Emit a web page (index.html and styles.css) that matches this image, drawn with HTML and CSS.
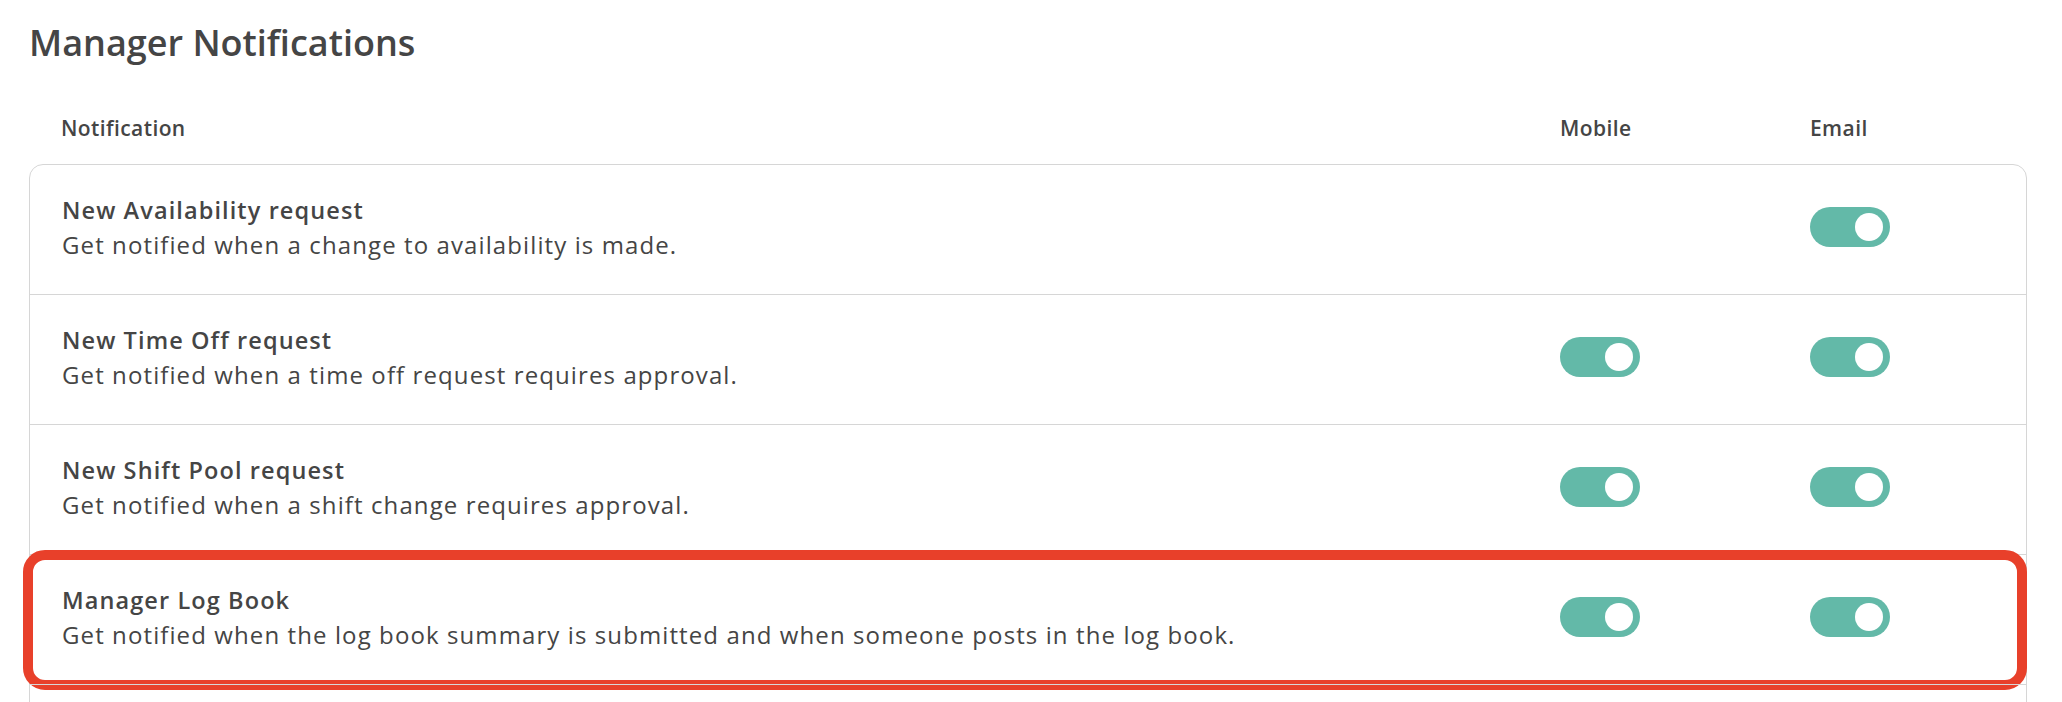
FILE: index.html
```html
<!DOCTYPE html>
<html lang="en">
<head>
    <meta charset="UTF-8">
    <meta name="viewport" content="width=device-width, initial-scale=1.0">
    <title>Manager Notifications</title>
    <link rel="stylesheet" href="styles.css">
</head>
<body>
    <div class="page">
        <h1 class="page-title">Manager Notifications</h1>

        <div class="list-head">
            <span>Notification</span>
            <span>Mobile</span>
            <span>Email</span>
        </div>

        <div class="card">
            <div class="row">
                <div class="info">
                    <div class="info-title">New Availability request</div>
                    <div class="info-desc">Get notified when a change to availability is made.</div>
                </div>
                <div class="cell"></div>
                <div class="cell"><span class="toggle on"></span></div>
            </div>

            <div class="row">
                <div class="info">
                    <div class="info-title">New Time Off request</div>
                    <div class="info-desc">Get notified when a time off request requires approval.</div>
                </div>
                <div class="cell"><span class="toggle on"></span></div>
                <div class="cell"><span class="toggle on"></span></div>
            </div>

            <div class="row">
                <div class="info">
                    <div class="info-title">New Shift Pool request</div>
                    <div class="info-desc">Get notified when a shift change requires approval.</div>
                </div>
                <div class="cell"><span class="toggle on"></span></div>
                <div class="cell"><span class="toggle on"></span></div>
            </div>

            <div class="row highlighted">
                <div class="info">
                    <div class="info-title">Manager Log Book</div>
                    <div class="info-desc">Get notified when the log book summary is submitted and when someone posts in the log book.</div>
                </div>
                <div class="cell"><span class="toggle on"></span></div>
                <div class="cell"><span class="toggle on"></span></div>
            </div>

            <!-- next row continues below the fold -->
            <div class="row"></div>
        </div>
    </div>
</body>
</html>
```

FILE: styles.css
```css
body {
    margin: 0;
    font-family: "Open Sans", Lato, Arial, sans-serif;
    color: #454545;
    background-color: #fff;
}
.page {
    padding: 14px 35px 0 29px;
}
.page-title {
    font-size: 36px;
    font-weight: 600;
    margin: 0;
    line-height: 58px;
}
.list-head {
    display: grid;
    grid-template-columns: 1fr 250px 217px;
    padding: 0 0 0 32px;
    margin-top: 42px;
    height: 50px;
    font-size: 21px;
    font-weight: 600;
    letter-spacing: 0.4px;
}
.card {
    border: 1px solid #d6d6d6;
    border-radius: 14px;
}
.row {
    display: grid;
    grid-template-columns: 1fr 250px 216px;
    align-items: center;
    height: 129px;
    padding-left: 32px;
    border-top: 1px solid #d6d6d6;
    position: relative;
}
.row:first-child {
    border-top: none;
}
.info {
    margin-bottom: 3px;
}
.info-title {
    font-size: 23.5px;
    font-weight: 600;
    line-height: 34px;
    letter-spacing: 1.1px;
}
.info-desc {
    font-size: 24px;
    line-height: 36px;
    letter-spacing: 1.1px;
}
.cell {
    display: flex;
    align-items: center;
}
.toggle {
    width: 80px;
    height: 40px;
    margin-bottom: 6px;
    border-radius: 20px;
    background-color: #63b9a8;
    position: relative;
}
.toggle::after {
    content: "";
    position: absolute;
    top: 6px;
    right: 7px;
    width: 28px;
    height: 28px;
    border-radius: 50%;
    background-color: #fff;
}
/* red annotation drawn over the row */
.highlighted::before {
    content: "";
    position: absolute;
    top: -5px;
    left: -7px;
    right: -1px;
    bottom: -6px;
    border: 10px solid #e8402a;
    border-radius: 22px;
}
```
